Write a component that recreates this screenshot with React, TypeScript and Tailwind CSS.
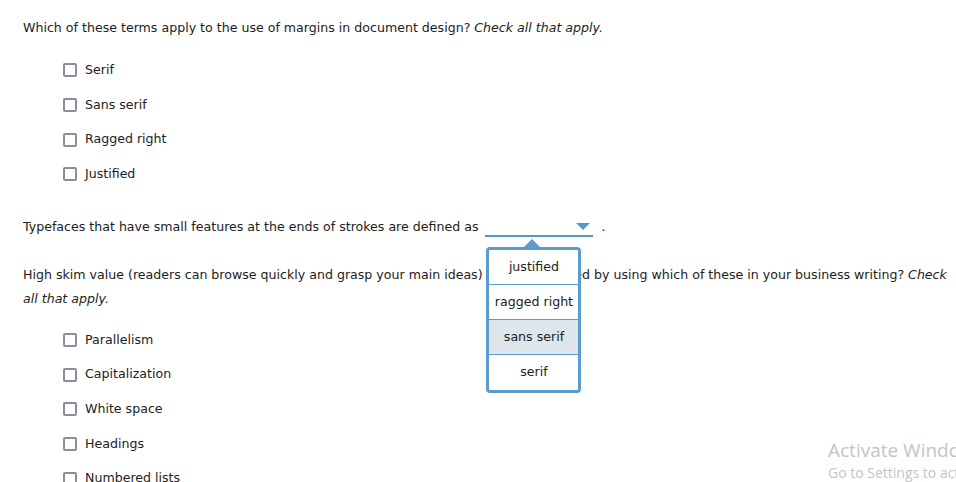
import React from 'react';

const font = { fontFamily: '"DejaVu Sans", Verdana, sans-serif' };

function Box() {
  return <span className="inline-block w-[14px] h-[14px] border-2 border-[#8e8c99] rounded-[2px] bg-white shrink-0" />;
}

function Option({ label }: { label: string }) {
  return (
    <label className="flex items-center gap-[8px] h-[34.7px] text-[12.6px] text-[#222]">
      <Box />
      <span>{label}</span>
    </label>
  );
}

const choices = ['justified', 'ragged right', 'sans serif', 'serif'];

export default function App() {
  return (
    <div className="relative w-[956px] h-[482px] overflow-hidden bg-white text-[#222]" style={font}>
      <div className="pl-[23px] pt-[18px]">
        <p className="text-[12.6px] leading-[20px]">
          Which of these terms apply to the use of margins in document design? <i>Check all that apply.</i>
        </p>
        <div className="pl-[40px] pt-[15px]">
          {['Serif', 'Sans serif', 'Ragged right', 'Justified'].map((l) => (
            <Option key={l} label={l} />
          ))}
        </div>

        <div className="mt-[25px] flex items-end text-[12.6px] leading-[20px]">
          <span>Typefaces that have small features at the ends of strokes are defined as</span>
          <span className="relative ml-[7px] inline-block w-[108px] h-[17px] border-b-2 border-[#5b96c8]">
            <svg className="absolute right-[3px] top-[3px]" width="14" height="8" viewBox="0 0 14 8">
              <path d="M0 0h14L7 7z" fill="#5b96c8" />
            </svg>
            <div className="absolute left-[1px] top-[27px] z-10 w-[95px]">
              <svg className="absolute left-[38px] -top-[8px]" width="16" height="8" viewBox="0 0 16 8">
                <path d="M0 8L8 0l8 8z" fill="#5b9bd0" />
              </svg>
              <ul className="border-[3px] border-[#5b9bd0] rounded-[4px] bg-white overflow-hidden">
                {choices.map((c, i) => (
                  <li
                    key={c}
                    className={`flex items-center justify-center h-[35px] text-[12.6px] ${i < 3 ? 'border-b border-[#5b9bd0]' : ''} ${c === 'sans serif' ? 'bg-[#dde6ea]' : ''}`}
                  >
                    {c}
                  </li>
                ))}
              </ul>
            </div>
          </span>
          <span className="ml-[8px]">.</span>
        </div>

        <p className="mt-[26px] w-[930px] text-[12.6px] leading-[24px]">
          High skim value (readers can browse quickly and grasp your main ideas) can be achieved by using which of these in your business writing? <i>Check all that apply.</i>
        </p>
        <div className="pl-[40px] pt-[12px]">
          {['Parallelism', 'Capitalization', 'White space', 'Headings', 'Numbered lists'].map((l) => (
            <Option key={l} label={l} />
          ))}
        </div>
      </div>

      <div className="absolute left-[828px] top-[437px] whitespace-nowrap text-[#c4c4c4]" style={{ fontFamily: '"Open Sans", "Noto Sans", sans-serif' }}>
        <div className="text-[19px] leading-[26px]">Activate Windows</div>
        <div className="text-[14px] leading-[20px]">Go to Settings to activate Windows.</div>
      </div>
    </div>
  );
}
